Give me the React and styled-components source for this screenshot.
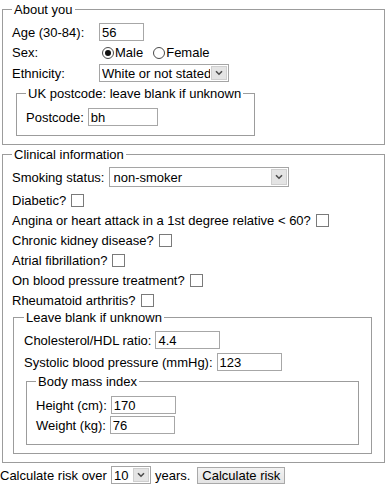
import React from "react";
import styled, { createGlobalStyle } from "styled-components";

const Global = createGlobalStyle`
  html, body { margin: 0; padding: 0; background: #fff; }
  body {
    font-family: "Liberation Sans", Arial, sans-serif;
    font-size: 13px;
    line-height: 15px;
    color: #000;
  }
  * { box-sizing: border-box; }
`;

const Fieldset = styled.fieldset`
  margin: ${(p) => p.$margin || "2px"};
  padding: ${(p) => p.$pad};
  border: 1px solid #9c9c9c;
  min-width: 0;
  width: ${(p) => (p.$shrink ? "fit-content" : "auto")};
`;

const Legend = styled.legend`
  padding: 0 2px;
  line-height: 15px;
  font-size: 13px;
`;

const AboutGrid = styled.div`
  display: grid;
  grid-template-columns: 87px auto;
  grid-template-rows: 18px 19px 18px;
  row-gap: 2px;
  align-items: center;
`;

const Label = styled.span`
  white-space: nowrap;
`;

const Cell = styled.div`
  display: flex;
  align-items: center;
`;

const Inline = styled.div`
  display: flex;
  align-items: center;
  gap: ${(p) => p.$gap ?? 4}px;
  height: ${(p) => p.$h || 18}px;
  white-space: nowrap;
`;

const TextInput = styled.input`
  width: ${(p) => p.$w}px;
  height: 18px;
  margin: 0;
  padding: 0 2px;
  border: 1px solid #a7a7a7;
  font-family: "Liberation Sans", Arial, sans-serif;
  font-size: 13px;
  color: #000;
  background: #fff;
  outline: none;
`;

const SelectWrap = styled.span`
  display: inline-flex;
  align-items: stretch;
  width: ${(p) => p.$w}px;
  height: ${(p) => p.$h || 18}px;
  border: 1px solid #a5a5a5;
  background: #fff;
`;

const NativeSelect = styled.select`
  appearance: none;
  -webkit-appearance: none;
  flex: 1;
  min-width: 0;
  border: 0;
  margin: 0;
  padding: 0 0 0 ${(p) => p.$pl ?? 2}px;
  background: transparent;
  font-family: "Liberation Sans", Arial, sans-serif;
  font-size: 13px;
  color: #000;
  outline: none;
`;

const ArrowBox = styled.span`
  width: 16px;
  margin: 1px;
  display: flex;
  align-items: center;
  justify-content: center;
  background: #e4e4e4;
  border: 1px solid #cfcfcf;
`;

const RadioGroup = styled.div`
  display: flex;
  align-items: center;
  height: 19px;
  padding-left: 3px;
`;

const RadioLabel = styled.label`
  display: inline-flex;
  align-items: center;
  gap: 1px;
  margin-right: 10px;
`;

const Radio = styled.input.attrs({ type: "radio" })`
  appearance: none;
  -webkit-appearance: none;
  width: 12px;
  height: 12px;
  margin: 0;
  border: 1px solid #4a4a4a;
  border-radius: 50%;
  background: #fff;
  display: inline-grid;
  place-content: center;
  &:checked::before {
    content: "";
    width: 6px;
    height: 6px;
    border-radius: 50%;
    background: #111;
  }
`;

const Check = styled.input.attrs({ type: "checkbox" })`
  appearance: none;
  -webkit-appearance: none;
  width: 13px;
  height: 13px;
  margin: 0 0 0 1px;
  border: 1px solid #7a7a7a;
  background: #fff;
`;

const CheckList = styled.div`
  padding-top: 3px;
`;

const CheckRow = styled.label`
  display: flex;
  align-items: center;
  gap: 4px;
  height: 20px;
  white-space: nowrap;
`;

const Stack = styled.div`
  display: flex;
  flex-direction: column;
  gap: ${(p) => p.$gap}px;
`;

const Footer = styled.div`
  display: flex;
  align-items: center;
  height: 20px;
  gap: 4px;
  white-space: nowrap;
`;

const Button = styled.button`
  height: 17px;
  margin-left: 3px;
  padding: 0 4px;
  border: 1px solid #a9a9a9;
  background: linear-gradient(#f3f3f3, #e3e3e3);
  font-family: "Liberation Sans", Arial, sans-serif;
  font-size: 13px;
  line-height: 15px;
  color: #000;
`;

const Chevron = () => (
  <svg width="8" height="6" viewBox="0 0 8 6">
    <path d="M1 1.2 L4 4.2 L7 1.2" fill="none" stroke="#4b4b4b" strokeWidth="1.6" />
  </svg>
);

const Select = ({ w, h, pl, value, options }) => (
  <SelectWrap $w={w} $h={h}>
    <NativeSelect $pl={pl} defaultValue={value}>
      {options.map((o) => (
        <option key={o}>{o}</option>
      ))}
    </NativeSelect>
    <ArrowBox>
      <Chevron />
    </ArrowBox>
  </SelectWrap>
);

const checks = [
  "Diabetic?",
  "Angina or heart attack in a 1st degree relative < 60?",
  "Chronic kidney disease?",
  "Atrial fibrillation?",
  "On blood pressure treatment?",
  "Rheumatoid arthritis?",
];

export default function App() {
  return (
    <>
      <Global />
      <Fieldset $pad="6px 9px 6px 9px">
        <Legend>About you</Legend>
        <AboutGrid>
          <Label>Age (30-84):</Label>
          <Cell>
            <TextInput $w={45} defaultValue="56" />
          </Cell>
          <Label>Sex:</Label>
          <RadioGroup>
            <RadioLabel>
              <Radio name="sex" defaultChecked />
              Male
            </RadioLabel>
            <RadioLabel>
              <Radio name="sex" />
              Female
            </RadioLabel>
          </RadioGroup>
          <Label>Ethnicity:</Label>
          <Cell>
            <Select
              w={130}
              value="White or not stated"
              options={[
                "White or not stated",
                "Indian",
                "Pakistani",
                "Bangladeshi",
                "Other Asian",
                "Black Caribbean",
                "Black African",
                "Chinese",
                "Other ethnic group",
              ]}
            />
          </Cell>
        </AboutGrid>
        <Fieldset $shrink $margin="4px 0 2px 4px" $pad="7px 11px 9px 9px">
          <Legend>UK postcode: leave blank if unknown</Legend>
          <Inline>
            <Label>Postcode:</Label>
            <TextInput $w={70} defaultValue="bh" />
          </Inline>
        </Fieldset>
      </Fieldset>

      <Fieldset $pad="5px 9px 6px 9px">
        <Legend>Clinical information</Legend>
        <Inline $h={20}>
          <Label>Smoking status:</Label>
          <Select
            w={180}
            h={20}
            pl={4}
            value="non-smoker"
            options={[
              "non-smoker",
              "ex-smoker",
              "light smoker",
              "moderate smoker",
              "heavy smoker",
            ]}
          />
        </Inline>
        <CheckList>
          {checks.map((c) => (
            <CheckRow key={c}>
              {c}
              <Check />
            </CheckRow>
          ))}
        </CheckList>
        <Fieldset $margin="0 3px 2px 1px" $pad="6px 9px 8px 10px">
          <Legend>Leave blank if unknown</Legend>
          <Stack $gap={4}>
            <Inline>
              <Label>Cholesterol/HDL ratio:</Label>
              <TextInput $w={65} defaultValue="4.4" />
            </Inline>
            <Inline>
              <Label>Systolic blood pressure (mmHg):</Label>
              <TextInput $w={65} defaultValue="123" />
            </Inline>
          </Stack>
          <Fieldset $margin="3px 3px 0 2px" $pad="7px 8px 10px 9px">
            <Legend>Body mass index</Legend>
            <Stack $gap={2}>
              <Inline>
                <Label>Height (cm):</Label>
                <TextInput $w={65} defaultValue="170" />
              </Inline>
              <Inline>
                <Label>Weight (kg):</Label>
                <TextInput $w={65} defaultValue="76" />
              </Inline>
            </Stack>
          </Fieldset>
        </Fieldset>
      </Fieldset>

      <Footer>
        <Label>Calculate risk over</Label>
        <Select w={40} value="10" options={["10", "5", "15", "20"]} />
        <Label>years.</Label>
        <Button>Calculate risk</Button>
      </Footer>
    </>
  );
}
